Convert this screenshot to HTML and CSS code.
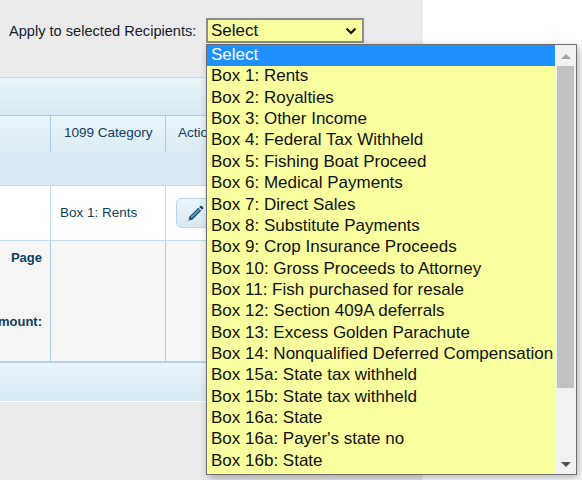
FILE: index.html
```html
<html lang="en">
<head>
    <meta charset="UTF-8">
    <meta name="viewport" content="width=device-width, initial-scale=1.0">
    <title>1099 Recipients</title>
    <link rel="stylesheet" href="styles.css">
</head>
<body>
    <div class="main">
        <div class="apply-bar">
            <span class="apply-label">Apply to selected Recipients:</span>
            <div class="select-box">
                <span>Select</span>
                <svg class="select-arrow" width="12" height="8" viewBox="0 0 12 8"><path d="M1.500 1.500 L6 6 L10.500 1.500" fill="none" stroke="#111" stroke-width="2.200"/></svg>
            </div>
        </div>
        <div class="panel">
            <div class="band"></div>
            <div class="row head-row">
                <div class="cell col-first"></div>
                <div class="cell col-cat">1099 Category</div>
                <div class="cell col-action">Action</div>
            </div>
            <div class="group-row"></div>
            <div class="row data-row">
                <div class="cell col-first"></div>
                <div class="cell col-cat">Box 1: Rents</div>
                <div class="cell col-action">
                    <button type="button" class="edit-btn">
                        <svg width="17" height="17" viewBox="0 0 18 18">
                            <path d="M1.500 16.500 L2.500 12.500 L12 3 L15 6 L5.500 15.500 Z" fill="#14405f"/>
                            <path d="M3.500 12.800 L12.300 4 L13.800 5.500 L5 14.300 Z" fill="#5d9ac4"/>
                            <path d="M13 2 L14 1 Q14.800 .4 15.500 1 L17 2.500 Q17.500 3.200 17 4 L16 5 Z" fill="#14405f"/>
                            <path d="M1.500 16.500 L2 14 L4 16 Z" fill="#c98a3a"/>
                        </svg>
                    </button>
                </div>
            </div>
            <div class="row foot-row">
                <div class="cell col-first foot-labels">
                    <div class="foot-label">Page</div>
                    <div class="foot-label">Amount:</div>
                </div>
                <div class="cell col-cat"></div>
                <div class="cell col-action"></div>
            </div>
            <div class="band band-bottom"></div>
        </div>
    </div>
    <div class="dropdown">
        <ul class="option-list">
            <li class="active">Select</li>
            <li>Box 1: Rents</li>
            <li>Box 2: Royalties</li>
            <li>Box 3: Other Income</li>
            <li>Box 4: Federal Tax Withheld</li>
            <li>Box 5: Fishing Boat Proceed</li>
            <li>Box 6: Medical Payments</li>
            <li>Box 7: Direct Sales</li>
            <li>Box 8: Substitute Payments</li>
            <li>Box 9: Crop Insurance Proceeds</li>
            <li>Box 10: Gross Proceeds to Attorney</li>
            <li>Box 11: Fish purchased for resale</li>
            <li>Box 12: Section 409A deferrals</li>
            <li>Box 13: Excess Golden Parachute</li>
            <li>Box 14: Nonqualified Deferred Compensation</li>
            <li>Box 15a: State tax withheld</li>
            <li>Box 15b: State tax withheld</li>
            <li>Box 16a: State</li>
            <li>Box 16a: Payer's state no</li>
            <li>Box 16b: State</li>
        </ul>
        <div class="scrollbar">
            <svg class="scroll-arrow" width="10" height="5" viewBox="0 0 10 5"><path d="M5 0 L10 5 L0 5 Z" fill="#a3a3a3"/></svg>
            <div class="scroll-track"><div class="scroll-thumb"></div></div>
            <svg class="scroll-arrow" width="10" height="5" viewBox="0 0 10 5"><path d="M0 0 L10 0 L5 5 Z" fill="#505050"/></svg>
        </div>
    </div>
</body>
</html>
```

FILE: styles.css
```css
html, body
{
    margin: 0;
    padding: 0;
    height: 100%;
    overflow: hidden;
    background: #fff;
    font-family: "Liberation Sans", Arial, sans-serif;
}
.main
{
    width: 423px;
    height: 480px;
    background: #ebebeb;
}
.apply-bar
{
    display: flex;
    align-items: center;
    height: 25px;
    padding: 18px 0 0 9px;
    margin-bottom: 34px;
}
.apply-label
{
    width: 197px;
    font-size: 14.600px;
    color: #15202e;
    white-space: nowrap;
}
.select-box
{
    display: flex;
    align-items: center;
    justify-content: space-between;
    box-sizing: border-box;
    width: 158px;
    height: 25px;
    padding: 0 5px 0 3px;
    background: #f9fe9f;
    border: 2px solid #8c8c8c;
    font-size: 17px;
    color: #111;
}
.panel
{
    border-top: 1px solid #c3dcea;
    border-bottom: 1px solid #fff;
}
.band
{
    height: 37px;
    background: linear-gradient(#e9f4fa, #d8e9f3);
    border-bottom: 1px solid #a9cfe3;
}
.band-bottom
{
    height: 38px;
    border-top: 2px solid #b4d3e5;
    border-bottom: none;
}
.row
{
    display: flex;
    color: #0e3f60;
    font-size: 12px;
}
.cell
{
    box-sizing: border-box;
    border-right: 1px solid #a9cfe3;
    display: flex;
    align-items: center;
}
.col-first
{
    width: 51px;
}
.col-cat
{
    width: 115px;
    padding-left: 13px;
}
.col-action
{
    flex: 1;
    padding-left: 12px;
    border-right: none;
}
.head-row
{
    height: 36px;
    background: linear-gradient(#e9f4fa, #dcebf4);
    border-bottom: 1px solid #a9cfe3;
}
.head-row .cell
{
    font-size: 13.500px;
    padding-bottom: 3px;
}
.group-row
{
    height: 33px;
    background: #d9e9f3;
    border-bottom: 1px solid #c3dcea;
    margin-top: -1px;
}
.data-row
{
    height: 54px;
    background: #fff;
    border-bottom: 1px solid #c3dcea;
}
.data-row .cell
{
    font-size: 13.500px;
    padding-left: 9px;
    padding-bottom: 2px;
    border-right-color: #c3dcea;
}
.data-row .col-first
{
    padding-left: 0;
}
.data-row .col-action
{
    padding-left: 10px;
    padding-bottom: 0;
    border-right: none;
}
.foot-row
{
    height: 120px;
    background: #f5f5f5;
}
.foot-labels
{
    display: block;
    overflow: hidden;
    padding: 9px 8px 0 0;
}
.foot-label
{
    display: flex;
    justify-content: flex-end;
    font-size: 13px;
    font-weight: bold;
    white-space: nowrap;
    height: 64px;
}
.edit-btn
{
    display: flex;
    align-items: center;
    justify-content: flex-start;
    box-sizing: border-box;
    width: 60px;
    height: 30px;
    padding: 0 0 0 10px;
    background: linear-gradient(#e9f4fa, #d8e9f3);
    border: 1px solid #b9d7e8;
    border-radius: 5px;
}
.dropdown
{
    position: absolute;
    left: 206px;
    top: 44px;
    box-sizing: border-box;
    width: 371px;
    height: 431px;
    display: flex;
    background: #f9fe9f;
    border: 1px solid #6f6f6f;
    box-shadow: 2px 3px 8px rgba(0, 0, 0, 0.3);
    overflow: hidden;
}
.option-list
{
    flex: 1;
    margin: 0;
    padding: 0;
    list-style: none;
    font-size: 17px;
    color: #111;
}
.option-list li
{
    height: 21.370px;
    line-height: 20.200px;
    padding-left: 4px;
    white-space: nowrap;
}
.option-list .active
{
    background: #1e90ff;
    color: #fff;
}
.scrollbar
{
    width: 21px;
    flex-shrink: 0;
    display: flex;
    flex-direction: column;
    align-items: center;
    background: #f1f1f1;
}
.scroll-arrow
{
    flex-shrink: 0;
    margin: 9px 0 7px;
}
.scroll-track
{
    flex: 1;
    align-self: stretch;
    padding: 0 2px;
}
.scroll-thumb
{
    height: 322px;
    background: #c1c1c1;
}
```
